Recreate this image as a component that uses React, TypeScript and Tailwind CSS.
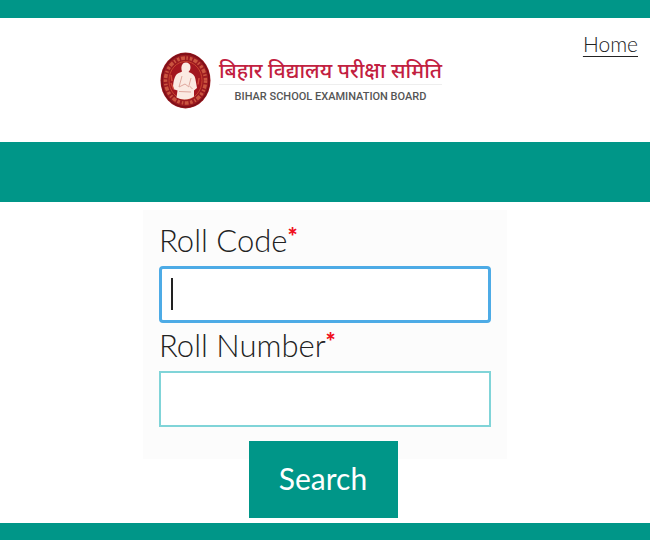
import React from "react";

function BoardEmblem() {
    return (
        <svg viewBox="0 0 102 114" className="w-[51px] h-[57px] shrink-0" aria-hidden="true">
            <ellipse cx="51" cy="57" rx="50" ry="56" fill="#9c1a20"/>
            <ellipse cx="51" cy="57" rx="47" ry="53" fill="none" stroke="#7c0f18" strokeWidth="3"/>
            <ellipse cx="51" cy="57" rx="40" ry="45" fill="none" stroke="#d9694a" strokeWidth="7"
                     strokeDasharray="5 3 8 3 3 4" opacity="0.75"/>
            <ellipse cx="51" cy="57" rx="33" ry="38" fill="#a3161f" stroke="#c8452f" strokeWidth="2"/>
            <path
                d="M46 23c6-4 15-1 15 7 0 4-1 7-4 10 7 2 13 6 14 15l3 17-6 5v12c-9 7-24 8-35 2l2-14-9-3c0-11 2-23 7-29 3-3 8-4 11-6-2-5-2-12 2-16z"
                fill="#fbeae2"/>
            <path d="M44 48l-6 22 12-6 8 6M62 52l-4 15 7 7M38 79l24 1" fill="none" stroke="#dfa79d" strokeWidth="2"/>
            <path d="M24 58l-2-12M22 62l5 12M78 52l-2 13" fill="none" stroke="#cf4a3a" strokeWidth="3"/>
        </svg>
    );
}

function Required() {
    return <span className="align-text-top text-2xl leading-8 font-black text-[#f01020]">*</span>;
}

export default function App() {
    return (
        <div className="min-h-screen flex flex-col bg-white font-['Lato','Liberation_Sans',sans-serif] text-[#222]">
            <div className="h-[18px] bg-[#009688]"/>

            <header className="h-[124px] grid grid-cols-[1fr_auto_1fr] px-3">
                <div/>
                <div className="flex items-center gap-2 pr-12">
                    <BoardEmblem/>
                    <div className="flex flex-col items-center pt-1">
                        <div
                            className="text-[21px] leading-7 font-medium text-[#c2203f] whitespace-nowrap border-b border-[#eee] font-['Noto_Sans','Noto_Sans_Devanagari',sans-serif]">
                            बिहार विद्यालय परीक्षा समिति
                        </div>
                        <div
                            className="text-[11px] leading-6 font-medium text-[#555] whitespace-nowrap font-['Roboto','Liberation_Sans',sans-serif]">
                            BIHAR SCHOOL EXAMINATION BOARD
                        </div>
                    </div>
                </div>
                <nav className="pt-3 text-right">
                    <a href="#" className="text-[21px] leading-7 font-light underline decoration-1 underline-offset-4">Home</a>
                </nav>
            </header>

            <div className="h-[60px] bg-[#009688]"/>

            <main className="flex-1 pt-2">
                <form className="w-[56%] mx-auto flex flex-col items-center" onSubmit={(e) => e.preventDefault()}>
                    <div className="w-full px-4 pt-2 pb-8 bg-[#fcfcfc]">
                        <label htmlFor="rollCode" className="block pt-0.5 pb-1.5 text-[31px] leading-10 font-light">
                            Roll Code<Required/>
                        </label>
                        <div className="relative">
                            <input id="rollCode" type="text"
                                   className="block w-full h-[57px] px-3 text-3xl bg-white border-3 border-[#4dabe6] rounded-sm outline-none caret-transparent"/>
                            <span className="absolute left-3 top-3 w-[2px] h-8 bg-[#222]"/>
                        </div>
                        <label htmlFor="rollNumber" className="block pt-0.5 pb-1.5 text-[31px] leading-10 font-light">
                            Roll Number<Required/>
                        </label>
                        <input id="rollNumber" type="text"
                               className="block w-full h-14 px-3 text-3xl bg-white border-2 border-[#80d4d8] outline-none"/>
                    </div>
                    <button type="submit"
                            className="-mt-[18px] mr-1 w-[149px] h-[77px] pb-1 bg-[#009688] text-white text-3xl">
                        Search
                    </button>
                </form>
            </main>

            <div className="h-[17px] bg-[#009688]"/>
        </div>
    );
}
